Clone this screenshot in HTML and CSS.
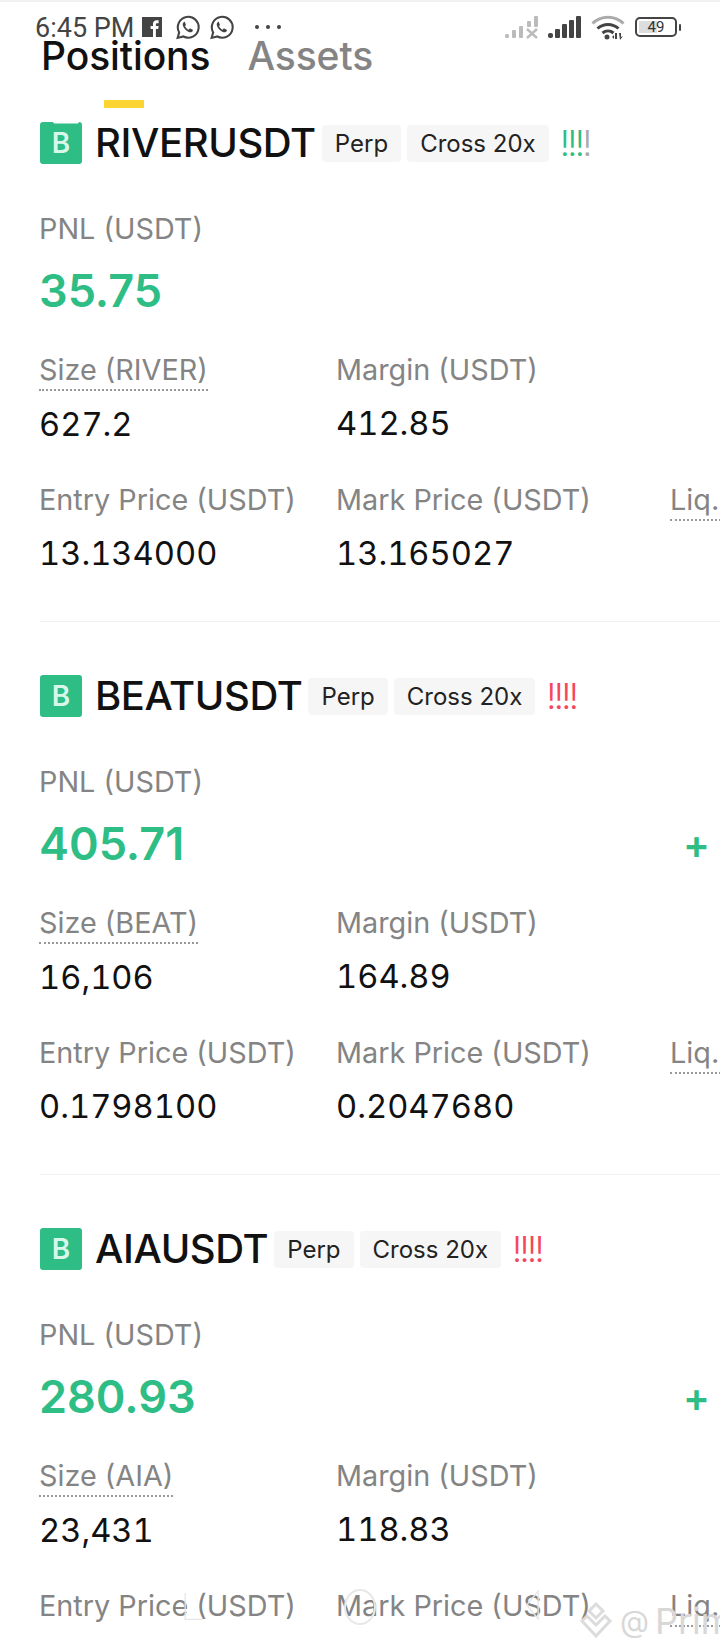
FILE: index.html
```html
<!DOCTYPE html>
<html lang="en">
<head>
<meta charset="utf-8">
<title>Positions</title>
<link rel="stylesheet" href="styles.css">
</head>
<body>
<div class="page">
  <div class="status">
    <span class="time">6:45 PM</span>
    <svg class="ic-fb" viewBox="0 0 20 20"><path fill="#444" d="M0 0h20v20H0z"/><path fill="#fff" d="M11 20v-8H8.600V9H11V7c0-2.500 1.500-3.700 3.600-3.700h2v2.900h-1.300c-1.100 0-1.400.5-1.400 1.300V9h2.700l-.4 3h-2.300v8z"/></svg>
    <svg class="ic-wa" viewBox="0 0 24 24"><path fill="none" stroke="#444" stroke-width="2" d="M2.500 22l1.500-5.300A10 10 0 1 1 8 20.600z"/><path fill="#444" d="M8.700 6.800c-1.300.8-1.700 2.400-.8 4.200 1.100 2.200 3 4.100 5.300 5.200 1.700.8 3.300.2 3.900-1.200.2-.5 0-.8-.4-1l-2-1c-.4-.2-.7-.1-.9.2l-.7.9c-1.500-.7-2.700-1.900-3.500-3.400l.7-.8c.3-.3.3-.6.100-.9l-.9-2c-.2-.5-.6-.5-1-.2z"/></svg>
    <svg class="ic-wa" viewBox="0 0 24 24"><path fill="none" stroke="#444" stroke-width="2" d="M2.500 22l1.500-5.300A10 10 0 1 1 8 20.600z"/><path fill="#444" d="M8.700 6.800c-1.300.8-1.700 2.400-.8 4.200 1.100 2.200 3 4.100 5.300 5.200 1.700.8 3.300.2 3.900-1.200.2-.5 0-.8-.4-1l-2-1c-.4-.2-.7-.1-.9.2l-.7.9c-1.500-.7-2.700-1.900-3.500-3.400l.7-.8c.3-.3.3-.6.100-.9l-.9-2c-.2-.5-.6-.5-1-.2z"/></svg>
    <span class="dots"><i></i><i></i><i></i></span>
    <span class="status-right">
      <svg class="ic-sig1" viewBox="0 0 34 24"><g fill="#bbb"><rect x="0" y="19" width="4" height="4" rx="1.500"/><rect x="7" y="15" width="4" height="8" rx="1"/><rect x="14" y="11" width="4" height="12" rx="1"/><rect x="22" y="6" width="4" height="6" rx="1"/><rect x="29" y="1" width="4" height="11" rx="1"/></g><path stroke="#bbb" stroke-width="2.500" d="M22 14l10 9M32 14l-10 9"/></svg>
      <svg class="ic-sig2" viewBox="0 0 34 24"><g fill="#444"><rect x="0" y="18" width="5" height="5" rx="2"/><rect x="7" y="14" width="5" height="9" rx="1"/><rect x="14" y="9" width="5" height="14" rx="1"/><rect x="21" y="5" width="5" height="18" rx="1"/><rect x="28" y="1" width="5" height="22" rx="1"/></g></svg>
      <svg class="ic-wifi" viewBox="0 0 34 26"><g fill="none" stroke-width="3"><path stroke="#aaa" d="M1.500 9.500C10 1 24 1 32.500 9.500"/><path stroke="#444" d="M6.500 14.500c6-5.500 15-5.500 21 0"/><path stroke="#444" d="M11.500 19c3.200-2.700 7.800-2.700 11 0"/></g><circle cx="16" cy="23" r="2.500" fill="#444"/><path fill="#444" d="M23 25v-4l-2 2zM24 19h2v6h-2zM28 19h2v4l2-1-3 4z"/></svg>
      <span class="battery"><span class="battery-fill"></span><span class="battery-num">49</span></span>
      <span class="battery-tip"></span>
    </span>
  </div>

  <nav class="tabs">
    <span class="tab tab-on">Positions</span>
    <span class="tab">Assets</span>
  </nav>
  <div class="tab-rule"></div>

  <section class="card">
    <div class="head">
      <svg class="badge" viewBox="0 0 42 42"><path fill="#2ebd85" d="M3 0h10l1 1.500h24l1-1.500a3 3 0 0 1 3 3v36a3 3 0 0 1-3 3H3a3 3 0 0 1-3-3V3a3 3 0 0 1 3-3z"/><text class="badge-b" x="21" y="31" text-anchor="middle">B</text></svg>
      <h2 class="sym">RIVERUSDT</h2>
      <span class="chip chip-first">Perp</span>
      <span class="chip">Cross 20x</span>
      <span class="risk"><b class="g">!</b><b class="g">!</b><b class="g">!</b><b class="n">!</b></span>
    </div>
    <div class="lbl lbl-pnl">PNL (USDT)</div>
    <div class="pnl-row"><span class="pnl">35.75</span></div>
    <div class="grid">
      <div class="cell"><span class="lbl dash">Size (RIVER)</span><span class="val">627.2</span></div>
      <div class="cell"><span class="lbl">Margin (USDT)</span><span class="val">412.85</span></div>
      <div class="cell"></div>
      <div class="cell"><span class="lbl">Entry Price (USDT)</span><span class="val">13.134000</span></div>
      <div class="cell"><span class="lbl">Mark Price (USDT)</span><span class="val">13.165027</span></div>
      <div class="cell"><span class="lbl dash">Liq. Price</span></div>
    </div>
  </section>

  <section class="card">
    <div class="head">
      <svg class="badge" viewBox="0 0 42 42"><rect fill="#2ebd85" width="42" height="42" rx="3"/><text class="badge-b" x="21" y="31" text-anchor="middle">B</text></svg>
      <h2 class="sym">BEATUSDT</h2>
      <span class="chip chip-first">Perp</span>
      <span class="chip">Cross 20x</span>
      <span class="risk"><b class="r">!</b><b class="r">!</b><b class="r">!</b><b class="r">!</b></span>
    </div>
    <div class="lbl lbl-pnl">PNL (USDT)</div>
    <div class="pnl-row"><span class="pnl">405.71</span><span class="plus">+</span></div>
    <div class="grid">
      <div class="cell"><span class="lbl dash">Size (BEAT)</span><span class="val">16,106</span></div>
      <div class="cell"><span class="lbl">Margin (USDT)</span><span class="val">164.89</span></div>
      <div class="cell"></div>
      <div class="cell"><span class="lbl">Entry Price (USDT)</span><span class="val">0.1798100</span></div>
      <div class="cell"><span class="lbl">Mark Price (USDT)</span><span class="val">0.2047680</span></div>
      <div class="cell"><span class="lbl dash">Liq. Price</span></div>
    </div>
  </section>

  <section class="card">
    <div class="head">
      <svg class="badge" viewBox="0 0 42 42"><rect fill="#2ebd85" width="42" height="42" rx="3"/><text class="badge-b" x="21" y="31" text-anchor="middle">B</text></svg>
      <h2 class="sym">AIAUSDT</h2>
      <span class="chip chip-first">Perp</span>
      <span class="chip">Cross 20x</span>
      <span class="risk"><b class="r">!</b><b class="r">!</b><b class="r">!</b><b class="r">!</b></span>
    </div>
    <div class="lbl lbl-pnl">PNL (USDT)</div>
    <div class="pnl-row"><span class="pnl">280.93</span><span class="plus">+</span></div>
    <div class="grid">
      <div class="cell"><span class="lbl dash">Size (AIA)</span><span class="val">23,431</span></div>
      <div class="cell"><span class="lbl">Margin (USDT)</span><span class="val">118.83</span></div>
      <div class="cell"></div>
      <div class="cell"><span class="lbl">Entry Price (USDT)</span></div>
      <div class="cell"><span class="lbl">Mark Price (USDT)</span></div>
      <div class="cell"><span class="lbl dash">Liq. Price</span></div>
    </div>
  </section>

  <svg class="ghost ghost-a" viewBox="0 0 24 34"><path fill="none" stroke="#e6e6e6" stroke-width="1.500" d="M2 1v30h20"/></svg>
  <span class="ghost ghost-b"></span>
  <svg class="ghost ghost-c" viewBox="0 0 16 34"><path fill="none" stroke="#e6e6e6" stroke-width="1.500" d="M15 1v32L2 17z"/></svg>
  <div class="mark">
    <svg class="mark-logo" viewBox="0 0 36 40"><g fill="none" stroke="#dcdcdc" stroke-width="3"><path d="M18 3l7 7-7 7-7-7z"/><path d="M4 20l5-5 9 9 9-9 5 5-14 15z"/></g></svg>
    <span class="mark-at">@</span>
    <span class="mark-name">Prime</span>
  </div>
</div>
</body>
</html>
```

FILE: styles.css
```css
* { box-sizing: border-box; }
html, body { margin: 0; padding: 0; background: #fff; }
.page {
  position: relative;
  width: 720px;
  height: 1650px;
  overflow: hidden;
  font-family: Inter, "Liberation Sans", sans-serif;
  border-top: 2px solid #f2f2f2;
  background: #fff;
}

/* status bar */
.status {
  position: absolute;
  top: 11px;
  left: 35px;
  right: 39px;
  height: 28px;
  display: flex;
  align-items: center;
  color: #444;
}
.time { font-family: Roboto, sans-serif; font-size: 27px; margin: 2px 8px 0 0; }
.ic-fb { width: 20px; height: 20px; margin-right: 13px; }
.ic-wa { width: 25px; height: 25px; margin-right: 9px; }
.dots { display: flex; gap: 7px; margin-left: 12px; }
.dots i { width: 4px; height: 4px; border-radius: 50%; background: #444; }
.status-right { margin-left: auto; display: flex; align-items: center; }
.ic-sig1 { width: 34px; height: 24px; margin-right: 9px; }
.ic-sig2 { width: 34px; height: 24px; margin-right: 9px; }
.ic-wifi { width: 34px; height: 26px; margin-right: 10px; }
.battery {
  position: relative;
  width: 42px;
  height: 20px;
  border: 2px solid #444;
  border-radius: 5px;
  display: flex;
  align-items: center;
  justify-content: center;
}
.battery-fill { position: absolute; left: 2px; top: 2px; bottom: 2px; width: 18px; background: #ddd; }
.battery-num { position: relative; font-family: Roboto, sans-serif; font-size: 15px; color: #333; }
.battery-tip { width: 2px; height: 7px; margin-left: 2px; background: #444; border-radius: 1px; }

/* tabs */
.tabs {
  display: flex;
  gap: 37px;
  padding: 33px 0 0 41px;
  height: 76px;
  align-items: flex-start;
}
.tab { font-size: 39px; line-height: 42px; font-weight: 500; color: #848484; letter-spacing: -0.1px; }
.tab-on { color: #111; }
.tab-rule { width: 40px; height: 8px; margin: 22px 0 0 104px; background: #fcd535; }

/* card */
.card { margin-left: 40px; padding: 53px 0 8px; border-top: 1px solid #f2f2f2; }
.card:first-of-type { padding-top: 14px; border-top: 0; }
.head { display: flex; align-items: center; height: 42px; }
.badge { width: 42px; height: 42px; flex: none; margin-right: 13px; }
.badge-b { font-family: Inter, sans-serif; font-size: 28px; font-weight: 600; fill: #d8f7ea; }
.sym { margin: 0; font-size: 40px; line-height: 42px; font-weight: 500; color: #111; letter-spacing: -0.4px; }
.chip {
  height: 37px;
  padding: 0 13px;
  margin-left: 6px;
  display: flex;
  align-items: center;
  border-radius: 4px;
  background: #f6f6f6;
  font-size: 24px;
  color: #222;
}
.risk { display: flex; gap: 1px; margin-left: 11px; font-size: 36px; line-height: 36px; }
.risk b { font-weight: 300; width: 6.5px; text-align: center; }
.g { color: #2ebd85; }
.n { color: #aaa; }
.r { color: #f6465d; }

.lbl { font-size: 28.8px; line-height: 34px; color: #848484; margin-left: -1px; }
.lbl-pnl { margin-top: 48px; }
.pnl-row { display: flex; justify-content: space-between; align-items: center; height: 48px; margin-top: 21px; padding-right: 10px; }
.pnl { font-size: 45px; line-height: 48px; font-weight: 600; color: #2ebd85; margin-left: -1px; }
.plus { font-size: 40px; font-weight: 600; color: #2ebd85; }

.grid {
  display: grid;
  grid-template-columns: 297px 334px 200px;
  grid-auto-rows: 130px;
  margin-top: 38px;
  white-space: nowrap;
}
.cell { display: flex; flex-direction: column; align-items: flex-start; }
.dash { border-bottom: 2px dotted #999; padding-bottom: 2px; }
.val { font-size: 32.7px; line-height: 40px; color: #111; margin: 16px 0 0 -1px; font-variant-numeric: tabular-nums; }
.dash + .val { margin-top: 13px; }

/* overlays */
.ghost { position: absolute; }
.ghost-a { left: 182px; top: 1590px; width: 24px; height: 30px; }
.ghost-b { left: 344px; top: 1587px; width: 32px; height: 36px; border: 2px solid #e8e8e8; border-radius: 50%; }
.ghost-c { left: 525px; top: 1588px; width: 14px; height: 30px; }
.mark { position: absolute; left: 578px; top: 1597px; display: flex; align-items: center; gap: 6px; color: #d8d8d8; }
.mark-logo { width: 36px; height: 40px; }
.mark-at { font-size: 30px; }
.mark-name { font-size: 36px; }
```
